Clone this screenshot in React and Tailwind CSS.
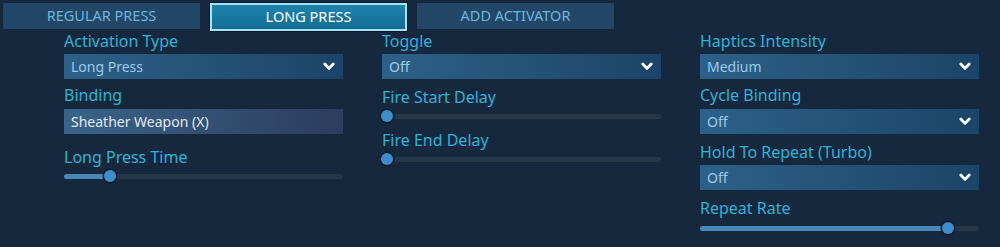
import React from 'react';

const font = { fontFamily: '"Noto Sans", "Open Sans", sans-serif' };

const Label = ({ children, className = '' }) => (
  <div className={`h-5 text-[16px] leading-5 text-[#2fb2d8] ${className}`}>{children}</div>
);

const Chevron = () => (
  <svg width="12" height="9" viewBox="0 0 12 9" className="text-white">
    <polyline
      points="1.8,2 6,6.4 10.2,2"
      fill="none"
      stroke="currentColor"
      strokeWidth="2.8"
      strokeLinecap="round"
      strokeLinejoin="round"
    />
  </svg>
);

const Dropdown = ({ value, className = '' }) => (
  <div
    className={`flex h-[25px] items-center justify-between bg-gradient-to-r from-[#2d6189] to-[#1c4468] pl-[7px] pr-[8px] text-[14px] text-[#9ccbea] ${className}`}
  >
    <span>{value}</span>
    <Chevron />
  </div>
);

const Slider = ({ pct, className = '' }) => (
  <div className={`relative h-[18px] ${className}`}>
    <div className="absolute left-0 right-0 top-[7px] h-[5px] rounded-full bg-[#263747]" />
    <div
      className="absolute left-0 top-[7px] h-[5px] rounded-full bg-[#4a87b9]"
      style={{ width: `${pct}%` }}
    />
    <div
      className="absolute top-[3px] h-[12px] w-[12px] -translate-x-1/2 rounded-full bg-[#3e8dcd] shadow-[0_0_0_1.5px_#0f1c2b]"
      style={{ left: `calc(${pct}% + ${pct < 3 ? 5 : 0}px)` }}
    />
  </div>
);

const Tab = ({ children, active }) =>
  active ? (
    <div className="flex h-[28px] w-[197px] items-center justify-center border-2 border-[#a6e3f6] bg-gradient-to-b from-[#1c84ad] to-[#156c93] text-[14.5px] text-white shadow-[0_0_0_1px_#0d1a28]">
      {children}
    </div>
  ) : (
    <div className="flex h-[26px] w-[197px] items-center justify-center bg-[#234767] text-[14.5px] text-[#6ab6e0]">
      {children}
    </div>
  );

export default function App() {
  return (
    <div className="h-[247px] w-[1000px] overflow-hidden bg-[#16283d]" style={font}>
      <div className="flex h-[31px] items-start gap-[10px] pl-[3px] pt-[3px]">
        <Tab>REGULAR PRESS</Tab>
        <Tab active>LONG PRESS</Tab>
        <Tab>ADD ACTIVATOR</Tab>
      </div>

      <div className="flex gap-[39px] pl-[64px]">
        {/* column 1 */}
        <div className="flex w-[279px] flex-col">
          <Label>Activation Type</Label>
          <Dropdown value="Long Press" className="mt-[3px]" />
          <Label className="mt-[6px]">Binding</Label>
          <div className="mt-[4px] flex h-[25px] items-center bg-gradient-to-r from-[#3a6489] to-[#2c3d5d] px-[7px] text-[14px] text-[#e1e9f1]">
            Sheather Weapon (X)
          </div>
          <Label className="mt-[13px]">Long Press Time</Label>
          <Slider pct={16.5} />
        </div>

        {/* column 2 */}
        <div className="flex w-[279px] flex-col">
          <Label>Toggle</Label>
          <Dropdown value="Off" className="mt-[3px]" />
          <Label className="mt-[8px]">Fire Start Delay</Label>
          <Slider pct={0} />
          <Label className="mt-[5px]">Fire End Delay</Label>
          <Slider pct={0} />
        </div>

        {/* column 3 */}
        <div className="flex w-[279px] flex-col">
          <Label>Haptics Intensity</Label>
          <Dropdown value="Medium" className="mt-[3px]" />
          <Label className="mt-[6px]">Cycle Binding</Label>
          <Dropdown value="Off" className="mt-[4px]" />
          <Label className="mt-[8px]">Hold To Repeat (Turbo)</Label>
          <Dropdown value="Off" className="mt-[3px]" />
          <Label className="mt-[8px]">Repeat Rate</Label>
          <Slider pct={89} className="mt-px" />
        </div>
      </div>
    </div>
  );
}
